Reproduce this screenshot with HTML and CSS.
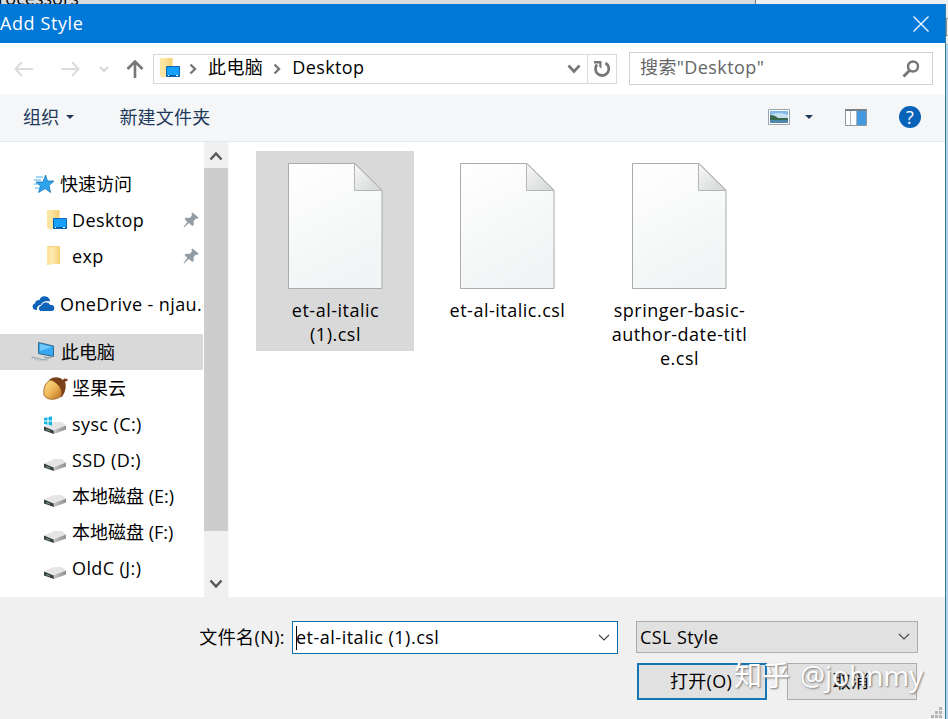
FILE: index.html
```html
<!DOCTYPE html>
<html lang="zh-CN">
<head>
  <meta charset="UTF-8" />
  <meta name="viewport" content="width=device-width, initial-scale=1.0"/>
  <title>Add Style</title>
  <link rel="stylesheet" href="styles.css">
</head>
<body>
  <svg class="defs" width="0" height="0">
    <defs>
      <linearGradient id="paper" x1="0" y1="0" x2="0.4" y2="1">
        <stop offset="0" stop-color="#fff"/>
        <stop offset="1" stop-color="#f2f4f5"/>
      </linearGradient>
      <linearGradient id="fold" x1="0" y1="0" x2="1" y2="1">
        <stop offset="0" stop-color="#f8f8f8"/>
        <stop offset="1" stop-color="#d3d5d6"/>
      </linearGradient>
      <linearGradient id="gold" x1="0" y1="0" x2="1" y2="0">
        <stop offset="0" stop-color="#fff0b8"/>
        <stop offset="1" stop-color="#f5ce72"/>
      </linearGradient>
      <linearGradient id="nut" x1="0" y1="0" x2="1" y2="1">
        <stop offset="0" stop-color="#ffe08a"/>
        <stop offset=".5" stop-color="#efb85a"/>
        <stop offset="1" stop-color="#b66a1b"/>
      </linearGradient>
      <linearGradient id="metal" x1="0" y1="0" x2="1" y2="0">
        <stop offset="0" stop-color="#c9c9c9"/>
        <stop offset="1" stop-color="#8f8f8f"/>
      </linearGradient>
    </defs>
    <symbol id="file" viewBox="0 0 96 128">
      <path d="M1.500 1.500H68L95 28v98.500H1.500z" fill="url(#paper)" stroke="#a9abac"/>
      <path d="M67.500 1.500V28.500H95z" fill="url(#fold)" stroke="#b4b6b7"/>
    </symbol>
    <symbol id="folder" viewBox="0 0 22 22">
      <path d="M1 1h13v18H4l-3 1z" fill="#f6d685"/>
      <path d="M1 1l4 2v17l-4-1z" fill="#fbe5a0"/>
      <path d="M5 3l9-2v18H5z" fill="url(#gold)"/>
    </symbol>
    <symbol id="desktop" viewBox="0 0 22 22">
      <path d="M1 1h12.500v19H4l-3-1z" fill="url(#gold)"/>
      <path d="M1 1l4 2v18l-4-2z" fill="#fbe5a0"/>
      <path d="M7.500 9.500h13v10h-13z" fill="#17a0fb" stroke="#0a66b5"/>
      <path d="M8 18.500h12" stroke="#095aa0"/>
      <path d="M9 18.500h1M17 18.500h2" stroke="#fff"/>
    </symbol>
    <symbol id="drive" viewBox="0 0 24 18">
      <path d="M1 8.500L11 4h8l4 3.500-13 5z" fill="#e5e5e5"/>
      <path d="M10 12.500L23 7.500v4L11 16z" fill="url(#metal)"/>
      <path d="M1 8.500l9.500 4 .5 3.500-10-3.500z" fill="#383b3b"/>
      <path d="M3 11.500l4 1.500" stroke="#75a68a"/>
    </symbol>
    <symbol id="pin" viewBox="0 0 16 16">
      <path d="M9.500 .5l6 5-1.300 1.400-1.400-.4-2.300 2.700.3 3.500-1.500 1.400-3.400-3.200L1 15.500.5 15l3.800-5L1.500 7 3 5.700l3.500.2 2.500-2.500-.6-1.600z" fill="#929ca5"/>
    </symbol>
  </svg>

  <div class="backdrop"><span>rocessors</span></div>
  <div class="edge"><i></i></div>

  <div class="dialog">
    <header class="title-bar">
      <span>Add Style</span>
      <svg width="16" height="16" viewBox="0 0 16 16"><path d="M.5.500l15 15M15.500.500l-15 15" stroke="#fff" stroke-width="1.200"/></svg>
    </header>

    <nav class="nav-bar">
      <div class="arrows">
        <svg width="20" height="16" viewBox="0 0 20 16"><path d="M8 1L1.500 8 8 15M2 8h17" fill="none" stroke="#dcdcdc" stroke-width="2"/></svg>
        <svg width="20" height="16" viewBox="0 0 20 16"><path d="M12 1l6.500 7-6.500 7M18 8H1" fill="none" stroke="#dcdcdc" stroke-width="2"/></svg>
        <svg width="10" height="6" viewBox="0 0 10 6"><path d="M1 1l4 4 4-4" fill="none" stroke="#d5d5d5" stroke-width="1.800"/></svg>
        <svg width="18" height="18" viewBox="0 0 18 18"><path d="M1.500 9L9 1.500 16.500 9M9 2v16" fill="none" stroke="#777" stroke-width="2.600"/></svg>
      </div>
      <div class="address">
        <svg class="place" width="22" height="22"><use href="#desktop"/></svg>
        <svg class="sep" width="8" height="12" viewBox="0 0 8 12"><path d="M1.500 1.500L6 6l-4.500 4.500" fill="none" stroke="#777" stroke-width="2.400"/></svg>
        <span class="crumb">此电脑</span>
        <svg class="sep" width="8" height="12" viewBox="0 0 8 12"><path d="M1.500 1.500L6 6l-4.500 4.500" fill="none" stroke="#777" stroke-width="2.400"/></svg>
        <span class="crumb">Desktop</span>
        <svg class="drop" width="14" height="10" viewBox="0 0 14 10"><path d="M1.500 1.500L7 7.500l5.500-6" fill="none" stroke="#777" stroke-width="2.600"/></svg>
        <div class="refresh">
          <svg width="18" height="18" viewBox="0 0 18 18"><path d="M4 4.500A6.700 6.700 0 1 0 12.500 3" fill="none" stroke="#777" stroke-width="2.800"/><path d="M1 1h7.500v7.500L6.300 7V3.500H1z" fill="#777"/></svg>
        </div>
      </div>
      <div class="search">
        <span>搜索"Desktop"</span>
        <svg width="18" height="18" viewBox="0 0 18 18"><circle cx="11" cy="6.500" r="5" fill="none" stroke="#777" stroke-width="2.500"/><path d="M7.500 10.500l-6 6" stroke="#777" stroke-width="3"/></svg>
      </div>
    </nav>

    <div class="toolbar">
      <span>组织</span>
      <i class="caret"></i>
      <span class="new-folder">新建文件夹</span>
      <svg class="view" width="22" height="16" viewBox="0 0 22 16">
        <path d="M.5.500h21v15H.5z" fill="#fff" stroke="#96a5ae"/>
        <path d="M2 2h18v12H2z" fill="#81b9e7"/>
        <path d="M2 6q8-4 18 0v3H2z" fill="#c5e0f0"/>
        <path d="M2 6q5 0 8 3h10v2H2z" fill="#3b684d"/>
        <path d="M2 11h18v3H2z" fill="#4f86ac"/>
      </svg>
      <i class="caret view-caret"></i>
      <svg class="pane" width="22" height="17" viewBox="0 0 22 17">
        <path d="M.5.500h21v16H.5z" fill="#fff" stroke="#8e999f"/>
        <path d="M0 1h22" stroke="#77838a" stroke-width="2"/>
        <path d="M5.500 2v14M11.500 2v14" stroke="#adb5ba"/>
        <path d="M12 2h9v14h-9z" fill="#4499e0"/>
      </svg>
      <span class="help">?</span>
    </div>

    <main class="content">
      <aside class="sidebar">
        <ul class="group">
          <li>
            <svg class="star" width="20" height="18" viewBox="0 0 20 18"><path d="M11.500 0l2 6H20l-5 4.500 1.600 7L11 13.500 4.500 17.500l2-6.500L2 7h7z" fill="#2da5ee" stroke="#1673b5" stroke-width=".8"/><path d="M2 2h7M0 5h7M0 9h4M1 13h5" stroke="#48aee8"/></svg>
            <span class="zh">快速访问</span>
          </li>
          <li class="child"><svg width="22" height="22"><use href="#desktop"/></svg><span>Desktop</span><svg class="pin" width="16" height="16"><use href="#pin"/></svg></li>
          <li class="child"><svg width="22" height="22"><use href="#folder"/></svg><span>exp</span><svg class="pin" width="16" height="16"><use href="#pin"/></svg></li>
        </ul>
        <ul class="group">
          <li>
            <svg class="cloud" width="23" height="16" viewBox="0 0 23 16"><path d="M5 14H3.500A3.500 3.500 0 0 1 3 7.200 4.500 4.500 0 0 1 7.500 4 5.500 5.500 0 0 1 17.500 3l.5 2.500C11 4 9 9 9 9c-3 0-4.500 2.500-4 5z" fill="#0e64b8"/><path d="M8.500 15.500a3.200 3.200 0 0 1 .6-6.200A5 5 0 0 1 18.300 8.600 3.500 3.500 0 0 1 20 15.500z" fill="#0e64b8" stroke="#fff"/></svg>
            <span>OneDrive - njau.edu.cn</span>
          </li>
        </ul>
        <ul class="group">
          <li class="selected">
            <svg class="pc" width="24" height="22" viewBox="0 0 24 22"><path d="M7.500 1.500L22.500 5v10.500l-15-3z" fill="#36a8f2" stroke="#37688e"/><path d="M9 3l12 3-12 4z" fill="#72c8fb"/><path d="M14 14v3l5-1M1 16l12 3 8-3" fill="none" stroke="#8fa1ac"/><path d="M0 17l9 3 8-1" fill="none" stroke="#b5c1c9" stroke-dasharray="2 1"/></svg>
            <span class="zh">此电脑</span>
          </li>
          <li class="child">
            <svg width="25" height="23" viewBox="0 0 25 23"><path d="M6 3C11-1 17 0 20 3l1-1.500 3.500.5v2l-2.500.5c2 6-.5 13-4 16z" fill="#794019"/><path d="M8 3C2 5 0 12 1 18c2 5 12 6 17 1C20 12 15 6 8 3z" fill="url(#nut)" stroke="#985719" stroke-width=".8"/></svg>
            <span class="zh">坚果云</span>
          </li>
          <li class="child">
            <svg class="system" width="24" height="20" viewBox="0 0 24 20"><use href="#drive" y="2" width="24" height="18"/><path d="M1 2l3.500-.7v3.200H1zM5.500 1L9 .3v4.200H5.500zM1 5.500h3.500v3.200L1 8zM5.500 5.500H9v4l-3.500-.7z" fill="#13b3e2"/></svg>
            <span>sysc (C:)</span>
          </li>
          <li class="child"><svg class="disk" width="24" height="18"><use href="#drive"/></svg><span>SSD (D:)</span></li>
          <li class="child"><svg class="disk" width="24" height="18"><use href="#drive"/></svg><span class="zh">本地磁盘 (E:)</span></li>
          <li class="child"><svg class="disk" width="24" height="18"><use href="#drive"/></svg><span class="zh">本地磁盘 (F:)</span></li>
          <li class="child"><svg class="disk" width="24" height="18"><use href="#drive"/></svg><span>OldC (J:)</span></li>
        </ul>
      </aside>
      <div class="scrollbar">
        <svg width="14" height="10" viewBox="0 0 14 10"><path d="M1.500 8.500L7 2.500l5.500 6" fill="none" stroke="#555" stroke-width="2.400"/></svg>
        <div class="thumb"></div>
        <svg width="14" height="10" viewBox="0 0 14 10"><path d="M1.500 1.500L7 7.500l5.500-6" fill="none" stroke="#555" stroke-width="2.400"/></svg>
      </div>
      <section class="files">
        <div class="file active"><svg width="96" height="128"><use href="#file"/></svg><p>et-al-italic<br>(1).csl</p></div>
        <div class="file"><svg width="96" height="128"><use href="#file"/></svg><p>et-al-italic.csl</p></div>
        <div class="file"><svg width="96" height="128"><use href="#file"/></svg><p>springer-basic-<br>author-date-titl<br>e.csl</p></div>
      </section>
    </main>

    <footer class="footer">
      <div class="name-row">
        <label>文件名(N):</label>
        <div class="filename">
          <i class="cursor"></i><span>et-al-italic (1).csl</span>
          <svg width="12" height="8" viewBox="0 0 12 8"><path d="M1 1l5 5 5-5" fill="none" stroke="#444" stroke-width="1.200"/></svg>
        </div>
        <div class="filetype">
          <span>CSL Style</span>
          <svg width="12" height="8" viewBox="0 0 12 8"><path d="M1 1l5 5 5-5" fill="none" stroke="#444" stroke-width="1.200"/></svg>
        </div>
      </div>
      <div class="actions">
        <button class="open">打开(O)</button>
        <button class="cancel">取消</button>
      </div>
      <div class="watermark"><span>知乎</span><span>@johnmy</span></div>
      <svg class="grip" width="12" height="12" viewBox="0 0 12 12"><path d="M8 0h3v3H8zM4 4h3v3H4zM8 4h3v3H8zM0 8h3v3H0zM4 8h3v3H4zM8 8h3v3H8z" fill="#b5b5b5"/></svg>
    </footer>
  </div>
</body>
</html>
```
FILE: styles.css
```css
* {
  box-sizing: border-box;
}

body {
  margin: 0;
  height: 719px;
  overflow: hidden;
  display: grid;
  grid-template-columns: 946px 2px;
  grid-template-rows: 4px 715px;
  background-color: #a9cfe0;
  color: #000;
  font-family: "Open Sans", "Noto Sans CJK SC", sans-serif;
  font-size: 18px;
  line-height: 24px;
  letter-spacing: 0.4px;
}

svg {
  display: block;
  flex-shrink: 0;
}

.defs {
  position: absolute;
}

.backdrop {
  grid-column: 1 / 3;
  height: 4px;
  overflow: hidden;
  background: linear-gradient(to right, #d9dadb 755px, #777 755px, #777 756px, #edf0f2 756px);
}

.backdrop span {
  display: block;
  margin: -12px 0 0 -2px;
  line-height: 20px;
  letter-spacing: 0;
}

.edge {
  grid-column: 2;
  grid-row: 2;
  background: linear-gradient(#e8edf0 40px, #b2d5e4 40px);
}

.edge i {
  display: block;
  height: 18px;
  margin-top: 14px;
  border: 1px solid #8796a0;
  border-right: none;
}

.dialog {
  grid-column: 1;
  grid-row: 2;
  display: flex;
  flex-direction: column;
  width: 946px;
  border-right: 1px solid #337a9f;
  background-color: #fff;
}

.title-bar {
  display: flex;
  justify-content: space-between;
  align-items: center;
  height: 39px;
  padding: 0 16px 0 0;
  background-color: #0078d7;
  color: #fff;
  letter-spacing: 0.6px;
}

.title-bar span {
  padding-bottom: 2px;
}

.nav-bar {
  display: flex;
  align-items: center;
  height: 51px;
}

.nav-bar span {
  padding-bottom: 3px;
}

.arrows {
  display: flex;
  align-items: center;
  width: 153px;
  padding-left: 14px;
}

.arrows svg:nth-child(2) {
  margin-left: 26px;
}

.arrows svg:nth-child(3) {
  margin-left: 19px;
}

.arrows svg:nth-child(4) {
  margin-left: 17px;
}

.address {
  display: flex;
  align-items: center;
  width: 464px;
  height: 30px;
  padding-left: 5px;
  border: 1px solid #d9d9d9;
}

.place {
  margin-bottom: 2px;
}

.sep {
  margin: 0 11px 0 8px;
}

.crumb + .sep {
  margin-left: 10px;
}

.drop {
  margin-left: auto;
}

.refresh {
  display: flex;
  align-items: center;
  justify-content: center;
  width: 29px;
  height: 28px;
  margin-left: 6px;
  border-left: 1px solid #d9d9d9;
}

.search {
  display: flex;
  align-items: center;
  justify-content: space-between;
  width: 304px;
  height: 33px;
  margin-left: 12px;
  padding: 0 12px 0 10px;
  border: 1px solid #d0d0d0;
  color: #666;
}

.toolbar {
  display: flex;
  align-items: center;
  height: 48px;
  padding: 0 24px 1px 23px;
  border-bottom: 1px solid #e3e8ea;
  background-color: #f4f6f8;
  color: #1e395b;
  letter-spacing: 0.2px;
}

.caret {
  margin-left: 7px;
  border: 4px solid transparent;
  border-top-color: #1e395b;
  border-bottom: none;
}

.new-folder {
  margin-left: 45px;
}

.view {
  margin-left: auto;
}

.view-caret {
  margin-left: 15px;
}

.pane {
  margin: 0 32px;
}

.help {
  width: 22px;
  height: 22px;
  border-radius: 50%;
  background-color: #0962ba;
  color: #fff;
  text-align: center;
  line-height: 22px;
}

.content {
  display: flex;
  height: 455px;
}

.sidebar {
  width: 203px;
  padding-top: 24px;
  overflow: hidden;
  white-space: nowrap;
}

.group {
  margin: 0 0 12px;
  padding: 0;
  list-style: none;
}

.group li {
  display: flex;
  align-items: center;
  height: 36px;
  padding-left: 35px;
}

.group li > svg:first-child {
  margin-right: 5px;
}

.group .star,
.group .pc {
  position: relative;
  left: -1px;
}

.group .cloud,
.group .pc {
  margin-left: -3px;
}

.group .child {
  padding-left: 43px;
}

.group .child > svg:first-child {
  margin-left: 3px;
  margin-right: 4px;
}

.group .child > svg[width="24"]:first-child {
  margin-left: 0;
  margin-right: 5px;
}

.group .child > svg[width="25"]:first-child {
  margin-left: 0;
}

.group .disk {
  margin-top: 8px;
}

.group .system {
  margin-top: 4px;
}

.group .selected {
  background-color: #d9d9d9;
}

.zh {
  letter-spacing: 0;
}

.pin {
  margin-left: auto;
  margin-right: 4px;
}

.scrollbar {
  display: flex;
  flex-direction: column;
  align-items: center;
  width: 25px;
  margin-left: 1px;
  padding: 9px 0 8px;
  border-right: 1px solid #f7f7f7;
  background-color: #f0f0f0;
}

.thumb {
  width: 24px;
  height: 363px;
  margin: 7px 0 auto;
  background-color: #cdcdcd;
}

.files {
  display: flex;
  gap: 14px;
  flex: 1;
  align-items: flex-start;
  margin-left: 3px;
  padding: 9px 0 0 24px;
}

.file {
  width: 158px;
  height: 200px;
  padding-top: 11px;
  text-align: center;
}

.file svg {
  margin: 0 auto;
}

.file p {
  margin: 8px 0 0 1px;
  letter-spacing: 0.5px;
}

.active {
  background-color: #d9d9d9;
}

.footer {
  position: relative;
  flex: 1;
  padding-top: 24px;
  background-color: #f0f0f0;
}

.name-row {
  display: flex;
}

.name-row label {
  width: 292px;
  padding-right: 7px;
  line-height: 33px;
  text-align: right;
}

.filename,
.filetype {
  display: flex;
  align-items: center;
  height: 33px;
  padding: 0 7px 0 3px;
}

.filename {
  width: 326px;
  border: 1px solid #0c6fa8;
  background-color: #fff;
}

.filename span {
  padding-bottom: 2px;
  letter-spacing: 0.5px;
}

.filename svg,
.filetype svg {
  margin-left: auto;
}

.cursor {
  width: 1px;
  height: 24px;
  margin-right: -1px;
  background-color: #000;
}

.filetype {
  width: 282px;
  height: 32px;
  margin-left: 18px;
  border: 1px solid #adadad;
  background-color: #e1e1e1;
}

.actions {
  display: flex;
  gap: 20px;
  margin: 9px 0 0 637px;
}

button {
  width: 130px;
  height: 37px;
  padding: 0 2px 2px 0;
  border: 1px solid #adadad;
  background-color: #e1e1e1;
  color: #000;
  font: inherit;
  letter-spacing: 0.3px;
}

.open {
  border: 2px solid #1676b5;
}

.watermark {
  position: absolute;
  left: 734px;
  top: 61px;
  display: flex;
  gap: 10px;
  color: #fff;
  font-size: 28px;
  line-height: 34px;
  letter-spacing: 0;
  text-shadow: 1px 1px 2px #777;
}

.grip {
  position: absolute;
  right: 2px;
  bottom: 0;
}
```
